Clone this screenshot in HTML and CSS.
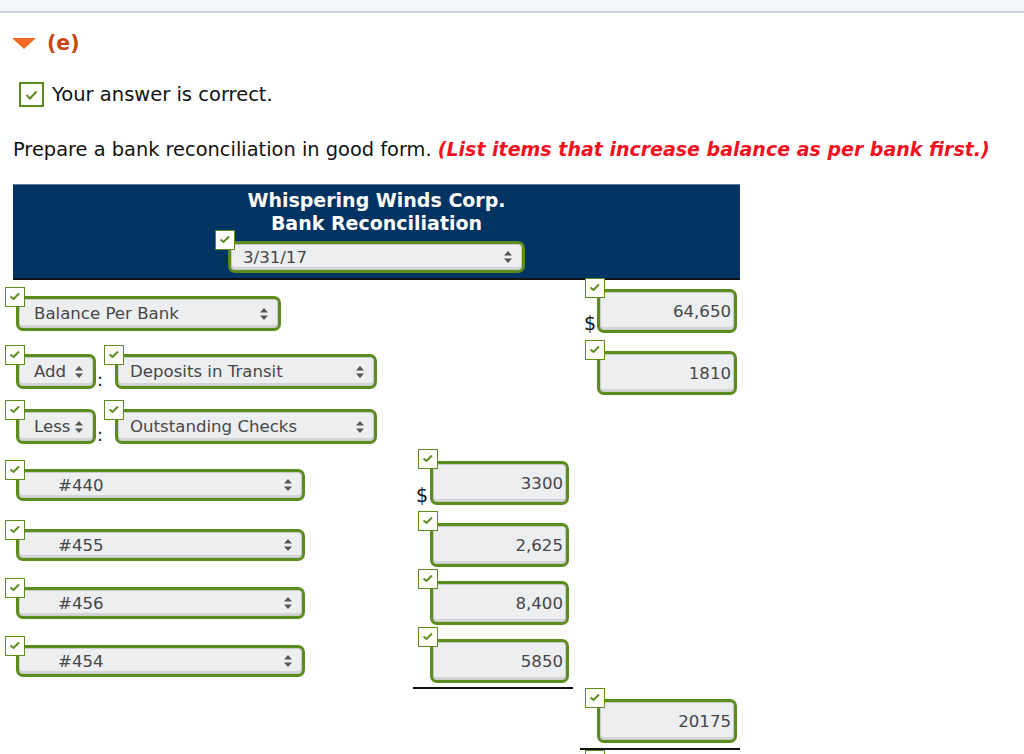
FILE: index.html
```html
<!DOCTYPE html>
<html>
<head>
<meta charset="utf-8">
<link rel="stylesheet" href="styles.css">
</head>
<body>
<div class="topstrip"></div>
<div class="page">
  <div class="part-head">
    <span class="tri"></span><span class="part-label">(e)</span>
  </div>
  <div class="answer">
    <span class="bigchk"><svg width="21" height="21" viewBox="0 0 21 21"><path d="M5.5 11 L9 14.5 L15.5 7.5" fill="none" stroke="#5b8c1c" stroke-width="2"/></svg></span>
    <span class="answer-text">Your answer is correct.</span>
  </div>
  <p class="prompt">Prepare a bank reconciliation in good form. <em class="hint">(List items that increase balance as per bank first.)</em></p>

  <div class="recon">
    <div class="recon-head">
      <div class="title">Whispering Winds Corp.</div>
      <div class="title">Bank Reconciliation</div>
      <div class="fld sel sel-date">
        <span class="chk chk-date"><svg width="18" height="18" viewBox="0 0 18 18"><path d="M4.5 8.5 L7.5 11 L13 5.5" fill="none" stroke="#5b8c1c" stroke-width="2"/></svg></span>
        <span class="txt">3/31/17</span>
        <svg class="arr" width="8" height="12" viewBox="0 0 8 12"><path d="M4 0 L8 4.5 H0 Z M0 7.5 H8 L4 12 Z" fill="#555"/></svg>
      </div>
    </div>

    <div class="row row-bal">
      <div class="col-left">
        <div class="fld sel sel-wide mt16">
          <span class="chk"><svg width="18" height="18" viewBox="0 0 18 18"><path d="M4.5 8.5 L7.5 11 L13 5.5" fill="none" stroke="#5b8c1c" stroke-width="2"/></svg></span>
          <span class="txt">Balance Per Bank</span>
          <svg class="arr" width="8" height="12" viewBox="0 0 8 12"><path d="M4 0 L8 4.5 H0 Z M0 7.5 H8 L4 12 Z" fill="#555"/></svg>
        </div>
      </div>
      <div class="col-mid"></div>
      <div class="col-right">
        <div class="money mt9">
          <span class="dollar dollar-r">$</span>
          <div class="fld inp inp-r"><span class="chk chk-inp"><svg width="18" height="18" viewBox="0 0 18 18"><path d="M4.5 8.5 L7.5 11 L13 5.5" fill="none" stroke="#5b8c1c" stroke-width="2"/></svg></span><span class="num">64,650</span></div>
        </div>
      </div>
    </div>

    <div class="row row-add">
      <div class="col-left">
        <div class="pair mt14">
          <div class="fld sel sel-short">
            <span class="chk"><svg width="18" height="18" viewBox="0 0 18 18"><path d="M4.5 8.5 L7.5 11 L13 5.5" fill="none" stroke="#5b8c1c" stroke-width="2"/></svg></span>
            <span class="txt">Add</span>
            <svg class="arr" width="8" height="12" viewBox="0 0 8 12"><path d="M4 0 L8 4.5 H0 Z M0 7.5 H8 L4 12 Z" fill="#555"/></svg>
          </div>
          <span class="colon">:</span>
          <div class="fld sel sel-mid">
            <span class="chk"><svg width="18" height="18" viewBox="0 0 18 18"><path d="M4.5 8.5 L7.5 11 L13 5.5" fill="none" stroke="#5b8c1c" stroke-width="2"/></svg></span>
            <span class="txt">Deposits in Transit</span>
            <svg class="arr" width="8" height="12" viewBox="0 0 8 12"><path d="M4 0 L8 4.5 H0 Z M0 7.5 H8 L4 12 Z" fill="#555"/></svg>
          </div>
        </div>
      </div>
      <div class="col-mid"></div>
      <div class="col-right">
        <div class="money mt11">
          <span class="dollar dollar-r"></span>
          <div class="fld inp inp-r"><span class="chk chk-inp"><svg width="18" height="18" viewBox="0 0 18 18"><path d="M4.5 8.5 L7.5 11 L13 5.5" fill="none" stroke="#5b8c1c" stroke-width="2"/></svg></span><span class="num">1810</span></div>
        </div>
      </div>
    </div>

    <div class="row row-less">
      <div class="col-left">
        <div class="pair mt11">
          <div class="fld sel sel-short">
            <span class="chk"><svg width="18" height="18" viewBox="0 0 18 18"><path d="M4.5 8.5 L7.5 11 L13 5.5" fill="none" stroke="#5b8c1c" stroke-width="2"/></svg></span>
            <span class="txt">Less</span>
            <svg class="arr" width="8" height="12" viewBox="0 0 8 12"><path d="M4 0 L8 4.5 H0 Z M0 7.5 H8 L4 12 Z" fill="#555"/></svg>
          </div>
          <span class="colon">:</span>
          <div class="fld sel sel-mid">
            <span class="chk"><svg width="18" height="18" viewBox="0 0 18 18"><path d="M4.5 8.5 L7.5 11 L13 5.5" fill="none" stroke="#5b8c1c" stroke-width="2"/></svg></span>
            <span class="txt">Outstanding Checks</span>
            <svg class="arr" width="8" height="12" viewBox="0 0 8 12"><path d="M4 0 L8 4.5 H0 Z M0 7.5 H8 L4 12 Z" fill="#555"/></svg>
          </div>
        </div>
      </div>
      <div class="col-mid"></div>
      <div class="col-right"></div>
    </div>

    <div class="row row-chk row-first">
      <div class="col-left">
        <div class="fld sel sel-check mt17">
          <span class="chk"><svg width="18" height="18" viewBox="0 0 18 18"><path d="M4.5 8.5 L7.5 11 L13 5.5" fill="none" stroke="#5b8c1c" stroke-width="2"/></svg></span>
          <span class="txt txt-indent">#440</span>
          <svg class="arr" width="8" height="12" viewBox="0 0 8 12"><path d="M4 0 L8 4.5 H0 Z M0 7.5 H8 L4 12 Z" fill="#555"/></svg>
        </div>
      </div>
      <div class="col-mid">
        <div class="money mt9">
          <span class="dollar dollar-m">$</span>
          <div class="fld inp inp-m"><span class="chk chk-inp chk-mid"><svg width="18" height="18" viewBox="0 0 18 18"><path d="M4.5 8.5 L7.5 11 L13 5.5" fill="none" stroke="#5b8c1c" stroke-width="2"/></svg></span><span class="num">3300</span></div>
        </div>
      </div>
      <div class="col-right"></div>
    </div>

    <div class="row row-chk">
      <div class="col-left">
        <div class="fld sel sel-check mt17">
          <span class="chk"><svg width="18" height="18" viewBox="0 0 18 18"><path d="M4.5 8.5 L7.5 11 L13 5.5" fill="none" stroke="#5b8c1c" stroke-width="2"/></svg></span>
          <span class="txt txt-indent">#455</span>
          <svg class="arr" width="8" height="12" viewBox="0 0 8 12"><path d="M4 0 L8 4.5 H0 Z M0 7.5 H8 L4 12 Z" fill="#555"/></svg>
        </div>
      </div>
      <div class="col-mid">
        <div class="money mt11">
          <span class="dollar dollar-m"></span>
          <div class="fld inp inp-m"><span class="chk chk-inp chk-mid"><svg width="18" height="18" viewBox="0 0 18 18"><path d="M4.5 8.5 L7.5 11 L13 5.5" fill="none" stroke="#5b8c1c" stroke-width="2"/></svg></span><span class="num">2,625</span></div>
        </div>
      </div>
      <div class="col-right"></div>
    </div>

    <div class="row row-chk">
      <div class="col-left">
        <div class="fld sel sel-check mt17">
          <span class="chk"><svg width="18" height="18" viewBox="0 0 18 18"><path d="M4.5 8.5 L7.5 11 L13 5.5" fill="none" stroke="#5b8c1c" stroke-width="2"/></svg></span>
          <span class="txt txt-indent">#456</span>
          <svg class="arr" width="8" height="12" viewBox="0 0 8 12"><path d="M4 0 L8 4.5 H0 Z M0 7.5 H8 L4 12 Z" fill="#555"/></svg>
        </div>
      </div>
      <div class="col-mid">
        <div class="money mt11">
          <span class="dollar dollar-m"></span>
          <div class="fld inp inp-m"><span class="chk chk-inp chk-mid"><svg width="18" height="18" viewBox="0 0 18 18"><path d="M4.5 8.5 L7.5 11 L13 5.5" fill="none" stroke="#5b8c1c" stroke-width="2"/></svg></span><span class="num">8,400</span></div>
        </div>
      </div>
      <div class="col-right"></div>
    </div>

    <div class="row row-chk">
      <div class="col-left">
        <div class="fld sel sel-check mt17">
          <span class="chk"><svg width="18" height="18" viewBox="0 0 18 18"><path d="M4.5 8.5 L7.5 11 L13 5.5" fill="none" stroke="#5b8c1c" stroke-width="2"/></svg></span>
          <span class="txt txt-indent">#454</span>
          <svg class="arr" width="8" height="12" viewBox="0 0 8 12"><path d="M4 0 L8 4.5 H0 Z M0 7.5 H8 L4 12 Z" fill="#555"/></svg>
        </div>
      </div>
      <div class="col-mid">
        <div class="money mt11">
          <span class="dollar dollar-m"></span>
          <div class="fld inp inp-m"><span class="chk chk-inp chk-mid"><svg width="18" height="18" viewBox="0 0 18 18"><path d="M4.5 8.5 L7.5 11 L13 5.5" fill="none" stroke="#5b8c1c" stroke-width="2"/></svg></span><span class="num">5850</span></div>
        </div>
      </div>
      <div class="col-right"></div>
    </div>

    <div class="row row-total">
      <div class="col-left"></div>
      <div class="col-mid"><div class="rule rule-mid"></div></div>
      <div class="col-right">
        <div class="money mt13">
          <span class="dollar dollar-r"></span>
          <div class="fld inp inp-r"><span class="chk chk-inp"><svg width="18" height="18" viewBox="0 0 18 18"><path d="M4.5 8.5 L7.5 11 L13 5.5" fill="none" stroke="#5b8c1c" stroke-width="2"/></svg></span><span class="num">20175</span></div>
        </div>
      </div>
    </div>

    <div class="row row-end">
      <div class="col-left"></div>
      <div class="col-mid"></div>
      <div class="col-right">
        <div class="rule rule-right"></div>
        <div class="money">
          <span class="dollar dollar-r"></span>
          <div class="fld inp inp-r"><span class="chk chk-inp"><svg width="18" height="18" viewBox="0 0 18 18"><path d="M4.5 8.5 L7.5 11 L13 5.5" fill="none" stroke="#5b8c1c" stroke-width="2"/></svg></span><span class="num"></span></div>
        </div>
      </div>
    </div>
  </div>
</div>
</body>
</html>
```

FILE: styles.css
```css
html, body {
  margin: 0;
  padding: 0;
  background: #ffffff;
}
body {
  font-family: "DejaVu Sans", Verdana, sans-serif;
  color: #111;
  overflow: hidden;
}
.topstrip {
  height: 11px;
  background: #f4f7fb;
  border-bottom: 2px solid #cdd6e1;
}
.page {
  padding-left: 13px;
}
.part-head {
  display: flex;
  align-items: center;
  height: 24px;
  margin-top: 18px;
}
.tri {
  width: 0;
  height: 0;
  border-left: 12px solid transparent;
  border-right: 12px solid transparent;
  border-top: 11px solid #f46a25;
  margin-left: -1px;
  margin-right: 11px;
}
.part-label {
  font-weight: bold;
  font-size: 20.5px;
  color: #c8461a;
}
.answer {
  display: flex;
  align-items: center;
  margin-top: 27px;
  margin-left: 6px;
  height: 25px;
}
.bigchk {
  width: 21px;
  height: 21px;
  border: 2px solid #5b8c1c;
  background: #fff;
  display: flex;
}
.answer-text {
  margin-left: 8px;
  font-size: 19.5px;
}
.prompt {
  margin: 30px 0 0 0;
  font-size: 19.4px;
  line-height: 24px;
  height: 24px;
}
.hint {
  color: #f0121f;
  font-weight: bold;
  font-style: italic;
  font-size: 19px;
}
.recon {
  margin-top: 23px;
  width: 727px;
}
.recon-head {
  background: #013462;
  border-top: 1px solid #5f7d9b;
  border-bottom: 2px solid #111;
  height: 93px;
  display: flex;
  flex-direction: column;
  align-items: center;
}
.title {
  color: #fff;
  font-weight: bold;
  font-size: 19px;
  line-height: 23px;
}
.title:first-child {
  margin-top: 4px;
}
.fld {
  position: relative;
  box-sizing: border-box;
  border: 3px solid #5b8c1c;
  border-radius: 7px;
  background: #edeef0;
  box-shadow: inset 0 0 0 1px #c9cacc, inset 0 -2px 0 1px #d4d5d7;
  display: flex;
  align-items: center;
  color: #474747;
  font-size: 16.6px;
}
.sel {
  justify-content: space-between;
  padding: 0 8px 0 15px;
}
.sel-date {
  width: 297px;
  height: 32px;
  margin-top: 6px;
  padding-left: 12px;
}
.sel-wide {
  width: 265px;
  height: 35px;
}
.sel-short {
  width: 80px;
  height: 35px;
}
.sel-mid {
  width: 262px;
  height: 35px;
  padding-left: 12px;
}
.sel-check {
  width: 289px;
  height: 32px;
}
.txt-indent {
  padding-left: 24px;
}
.arr {
  flex: none;
  margin-right: 2px;
}
.chk {
  position: absolute;
  left: -14px;
  top: -12px;
  width: 18px;
  height: 18px;
  border: 1px solid #5b8c1c;
  background: #fff;
  display: flex;
}
.chk-date {
  left: -16px;
  top: -14px;
}
.chk-inp {
  left: -15px;
  top: -14px;
}
.chk-mid {
  top: -15px;
}
.row {
  display: flex;
}
.col-left {
  width: 397px;
  flex: none;
  padding-left: 3px;
  box-sizing: border-box;
}
.col-mid {
  width: 165px;
  flex: none;
}
.col-right {
  width: 165px;
  flex: none;
}
.row-bal { height: 60px; }
.row-add { height: 58px; }
.row-less { height: 54px; }
.row-chk { height: 58px; }
.row-first { height: 60px; }
.row-total { height: 62px; }
.row-end { height: 60px; }
.mt9 { margin-top: 9px; }
.mt11 { margin-top: 11px; }
.mt13 { margin-top: 13px; }
.mt14 { margin-top: 14px; }
.mt16 { margin-top: 16px; }
.mt17 { margin-top: 17px; }
.pair {
  display: flex;
  align-items: flex-end;
}
.colon {
  width: 19px;
  flex: none;
  font-size: 18px;
  line-height: 18px;
  color: #111;
  padding-left: 1px;
  box-sizing: border-box;
}
.money {
  display: flex;
  align-items: flex-end;
}
.dollar {
  flex: none;
  font-size: 19px;
  line-height: 20px;
  color: #111;
  box-sizing: border-box;
}
.dollar-r { width: 22px; padding-left: 9px; }
.dollar-m { width: 20px; padding-left: 6px; }
.inp {
  height: 44px;
  justify-content: flex-end;
  padding-right: 3px;
}
.inp-r { width: 140px; }
.inp-m { width: 139px; }
.rule {
  height: 2px;
  background: #111;
}
.rule-mid {
  margin-top: 1px;
  margin-left: 3px;
  width: 160px;
}
.rule-right {
  margin-left: 5px;
  width: 160px;
  margin-bottom: -1px;
}
.row-end .money {
  margin-top: 12px;
}
```
